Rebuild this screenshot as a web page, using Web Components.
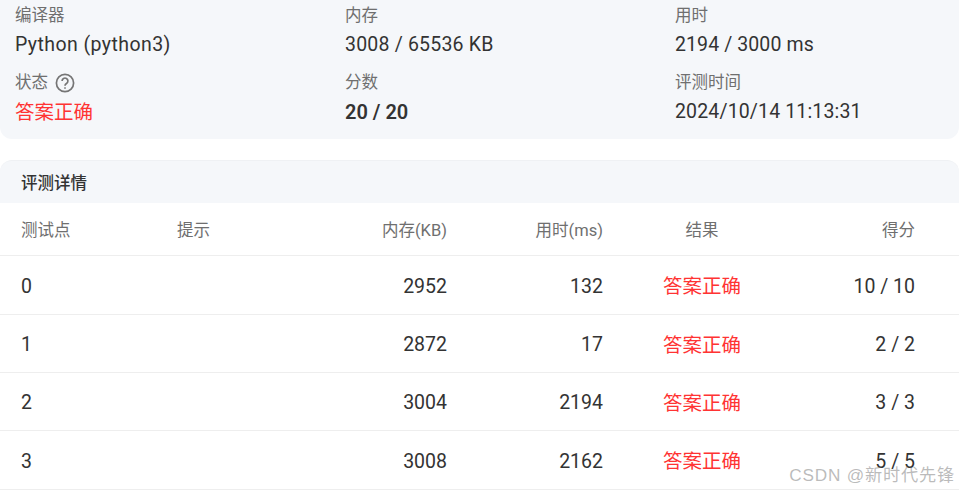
<!DOCTYPE html>
<html lang="zh"><head><meta charset="utf-8"><style>
html,body{margin:0;background:#fff;overflow:hidden}
body{width:959px;height:491px;position:relative;font-family:Roboto,"Noto Sans CJK SC",sans-serif;color:#333}
</style></head><body>
<summary-panel>
<info-item label="编译器" value="Python (python3)" ls=".42"></info-item>
<info-item label="内存" value="3008 / 65536 KB" ls=".2"></info-item>
<info-item label="用时" value="2194 / 3000 ms" ls=".1"></info-item>
<info-item label="状态" value="答案正确" help tone="ok"></info-item>
<info-item label="分数" value="20 / 20" tone="bold"></info-item>
<info-item label="评测时间" value="2024/10/14 11:13:31" ls=".15"></info-item>
</summary-panel>
<detail-card title="评测详情">
<case-row head h="53" a="测试点" b="提示" c="内存(KB)" d="用时(ms)" e="结果" f="得分"></case-row>
<case-row h="59" a="0" c="2952" d="132" e="答案正确" f="10 / 10"></case-row>
<case-row h="58" a="1" c="2872" d="17" e="答案正确" f="2 / 2"></case-row>
<case-row h="58" a="2" c="3004" d="2194" e="答案正确" f="3 / 3"></case-row>
<case-row h="59" a="3" c="3008" d="2162" e="答案正确" f="5 / 5"></case-row>
</detail-card>
<water-mark>CSDN @新时代先锋</water-mark>
<script>
const def=(n,html)=>customElements.define(n,class extends HTMLElement{connectedCallback(){if(this.shadowRoot)return;const s=this.attachShadow({mode:'open'});s.innerHTML=typeof html==='function'?html(this):html;}});
const esc=s=>s==null?'':s;
def('summary-panel',`<style>:host{display:grid;grid-template-columns:330px 330px 1fr;align-content:start;box-sizing:border-box;height:139px;padding:1px 15px 0;background:#f5f7fa;border-radius:0 0 12px 12px}</style><slot></slot>`);
def('info-item',h=>`<style>
:host{display:flex;flex-direction:column;height:67px}
.l{font-size:16.5px;line-height:22px;margin-top:4px;color:#6f6f6f;display:flex;align-items:center;gap:7px}
.v{font-size:19.5px;line-height:28px;margin-top:4px;color:#333}
.ok{color:#f33;padding-top:1px}.bold{font-weight:600;font-size:20px}
svg{display:block}
</style><div class="l"><span>${h.getAttribute('label')}</span>${h.hasAttribute('help')?`<svg width="20" height="20" viewBox="0 0 20 20" fill="none" stroke="#757575" stroke-width="1.7"><circle cx="10" cy="10" r="8.6"/><path d="M7.1 7.9a2.9 2.9 0 1 1 4.4 2.5c-1 .6-1.5 1.1-1.5 2.3"/><circle cx="10" cy="15" r=".5" fill="#757575" stroke-width=".8"/></svg>`:''}</div><div class="v ${esc(h.getAttribute('tone'))}" style="letter-spacing:${h.getAttribute('ls')||0}px">${h.getAttribute('value')}</div>`);
def('detail-card',h=>`<style>
:host{display:block;margin-top:21px}
.h{height:43px;box-sizing:border-box;padding:0 21px;display:flex;align-items:center;background:#f5f7fa;border-top:1px solid #eff1f4;border-radius:12px 12px 0 0;font-size:16.5px;font-weight:500;color:#333}
</style><div class="h">${h.getAttribute('title')}</div><slot></slot>`);
def('case-row',h=>{const g=k=>esc(h.getAttribute(k));const hd=h.hasAttribute('head');return `<style>
:host{display:grid;grid-template-columns:156px 135px 135px 156px 198px 114px;padding:${hd?0:2}px 0 0 21px;box-sizing:border-box;height:${h.getAttribute('h')}px;align-items:center;border-bottom:1px solid #eee;font-size:${hd?16.5:19.5}px;color:${hd?'#6f6f6f':'#333'}}
.r{text-align:right}.c{text-align:center}.ok{color:#f33;margin-bottom:3px}
</style><div>${g('a')}</div><div>${g('b')}</div><div class="r">${g('c')}</div><div class="r">${g('d')}</div><div class="c ${hd?'':'ok'}">${g('e')}</div><div class="r">${g('f')}</div>`});
def('water-mark',`<style>:host{position:absolute;right:4px;bottom:6px;font:17.2px/20px "Liberation Sans","Noto Sans CJK SC",sans-serif;color:rgba(120,120,120,.5);letter-spacing:.8px}</style><slot></slot>`);
</script>
</body></html>
